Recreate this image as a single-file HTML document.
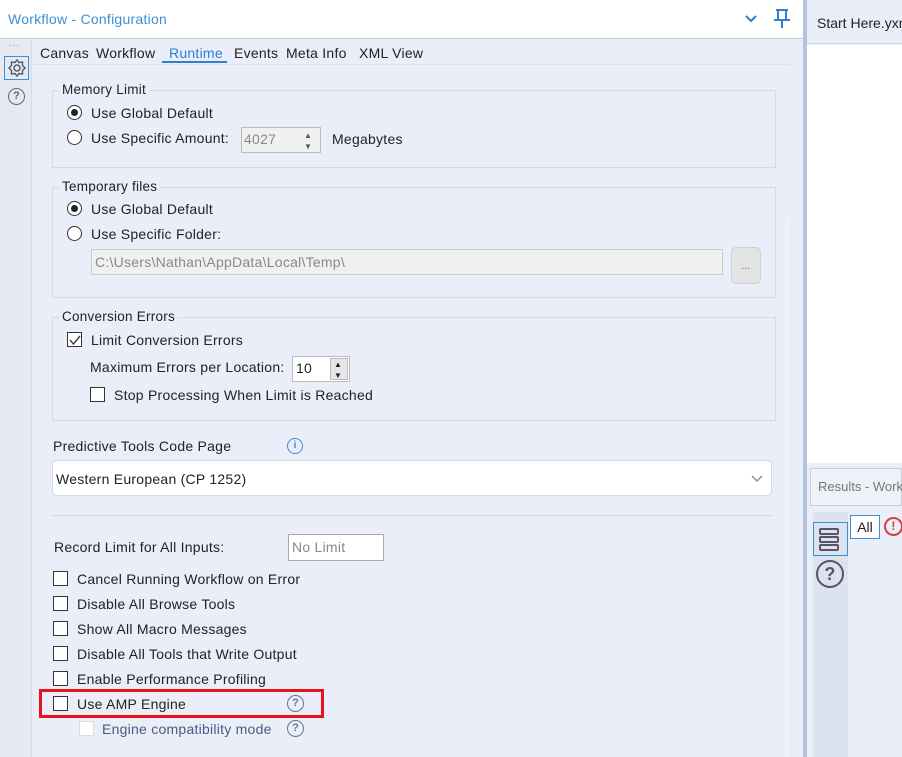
<!DOCTYPE html>
<html><head><style>
*{box-sizing:border-box;margin:0;padding:0}
body{width:902px;height:757px;overflow:hidden;background:#e9eef8;font-family:"Liberation Sans",sans-serif;font-size:14px;letter-spacing:.25px;color:#222;position:relative}
.a{position:absolute}
.t{position:absolute;white-space:nowrap;line-height:16px}
.grp{position:absolute;border:1px solid #d6dbe3}
.lg{position:absolute;background:#e9eef8;padding:0 3px;line-height:14px;font-size:13.5px}
.rad{position:absolute;width:15px;height:15px;border:1px solid #333;border-radius:50%;background:#fff}
.rad.on::after{content:"";position:absolute;left:3px;top:3px;width:7px;height:7px;border-radius:50%;background:#222}
.cb{position:absolute;width:15px;height:15px;border:1px solid #333;background:#fff}
.q{position:absolute;width:17px;height:17px;border:1.5px solid #6a7590;border-radius:50%;color:#6a7590;font-size:11px;font-weight:bold;text-align:center;line-height:14px;letter-spacing:0}
</style></head><body>
<div class="a" style="left:0;top:0;width:804px;height:39px;background:#fff;border-bottom:1px solid #c8ccd4"></div>
<div class="t" style="left:8px;top:11px;color:#3d8fd4;font-size:14px">Workflow - Configuration</div>
<svg class="a" style="left:744px;top:14px" width="14" height="10"><path d="M2 2 L7 7 L12 2" stroke="#2d7fd0" stroke-width="2" fill="none"/></svg>
<svg class="a" style="left:772px;top:8px" width="20" height="22"><path d="M4 2H16M6 2V11M14 2V11M2 12H18M10 12V20" stroke="#2d7fd0" stroke-width="2" fill="none"/></svg>
<div class="a" style="left:803px;top:0;width:4px;height:757px;background:#b4c3e0"></div>
<div class="a" style="left:807px;top:0;width:95px;height:44px;background:#e9eef8;border-bottom:1px solid #d0d8e8"></div>
<div class="t" style="left:817px;top:15px;font-size:14px;letter-spacing:0">Start Here.yxmd</div>
<div class="a" style="left:807px;top:45px;width:95px;height:418px;background:#fff"></div>
<div class="a" style="left:807px;top:463px;width:95px;height:294px;background:#e9eef8"></div>
<div class="a" style="left:810px;top:468px;width:92px;height:38px;border:1px solid #ccd;background:#eef1f6"></div>
<div class="t" style="left:818px;top:479px;color:#777;letter-spacing:0;font-size:13px">Results - Workflow</div>
<div class="a" style="left:813px;top:512px;width:35px;height:245px;background:#dce3ee"></div>
<div class="a" style="left:813px;top:522px;width:35px;height:34px;border:1px solid #3d8fd4"></div>
<svg class="a" style="left:818px;top:527px" width="24" height="26"><rect x="2" y="2" width="18" height="5" rx="1" fill="none" stroke="#556" stroke-width="2"/><rect x="2" y="10" width="18" height="5" rx="1" fill="none" stroke="#556" stroke-width="2"/><rect x="2" y="18" width="18" height="5" rx="1" fill="none" stroke="#556" stroke-width="2"/></svg>
<div class="a" style="left:816px;top:560px;width:28px;height:28px;border:2.5px solid #556;border-radius:50%;color:#556;font-weight:bold;font-size:18px;text-align:center;line-height:24px">?</div>
<div class="a" style="left:850px;top:515px;width:30px;height:24px;border:1px solid #3d8fd4;background:#fff;font-size:14px;text-align:center;line-height:22px;letter-spacing:0">All</div>
<div class="a" style="left:884px;top:517px;width:19px;height:19px;border:2px solid #c44;border-radius:50%;color:#c44;font-weight:bold;font-size:12px;text-align:center;line-height:15px">!</div>
<div class="a" style="left:0;top:40px;width:32px;height:717px;background:#e4e9f2;border-right:1px solid #d6dce6"></div>
<div class="t" style="left:9px;top:38px;color:#999;font-size:10px">···</div>
<div class="a" style="left:4px;top:56px;width:25px;height:24px;border:1px solid #3d8fd4"></div>
<svg class="a" style="left:7px;top:58px" width="20" height="20"><circle cx="10" cy="10" r="3" fill="none" stroke="#556" stroke-width="1.5"/><path d="M10 2L12 4.5L15.5 4L15.5 7.5L18 10L15.5 12.5L15.5 16L12 15.5L10 18L8 15.5L4.5 16L4.5 12.5L2 10L4.5 7.5L4.5 4L8 4.5Z" fill="none" stroke="#556" stroke-width="1.4"/></svg>
<div class="q" style="left:8px;top:88px;border-color:#667;color:#667">?</div>
<div class="t" style="left:40px;top:45px">Canvas</div>
<div class="t" style="left:96px;top:45px">Workflow</div>
<div class="t" style="left:169px;top:45px;color:#2d7fd0">Runtime</div>
<div class="a" style="left:162px;top:61px;width:65px;height:2px;background:#2d7fd0"></div>
<div class="t" style="left:234px;top:45px">Events</div>
<div class="t" style="left:286px;top:45px">Meta Info</div>
<div class="t" style="left:359px;top:45px">XML View</div>
<div class="a" style="left:33px;top:64px;width:757px;height:1px;background:#dde2ea"></div>
<div class="a" style="left:785px;top:218px;width:4px;height:539px;background:#eef2f9"></div>
<div class="grp" style="left:52px;top:90px;width:724px;height:78px"></div>
<div class="lg" style="left:59px;top:83px">Memory Limit</div>
<div class="rad on" style="left:67px;top:105px"></div><div class="t" style="left:91px;top:105px">Use Global Default</div>
<div class="rad" style="left:67px;top:130px"></div><div class="t" style="left:91px;top:130px">Use Specific Amount:</div>
<div class="a" style="left:241px;top:127px;width:80px;height:26px;border:1px solid #bbb;background:#f0f0f0"></div>
<div class="t" style="left:244px;top:131px;color:#888">4027</div>
<div class="t" style="left:304px;top:128px;font-size:8px;color:#555">▲</div><div class="t" style="left:304px;top:139px;font-size:8px;color:#555">▼</div>
<div class="t" style="left:332px;top:131px">Megabytes</div>
<div class="grp" style="left:52px;top:187px;width:724px;height:111px"></div>
<div class="lg" style="left:59px;top:180px">Temporary files</div>
<div class="rad on" style="left:67px;top:201px"></div><div class="t" style="left:91px;top:201px">Use Global Default</div>
<div class="rad" style="left:67px;top:226px"></div><div class="t" style="left:91px;top:226px">Use Specific Folder:</div>
<div class="a" style="left:91px;top:249px;width:632px;height:26px;border:1px solid #ccc;background:#f0f0f0"></div>
<div class="t" style="left:95px;top:254px;color:#888">C:\Users\Nathan\AppData\Local\Temp\</div>
<div class="a" style="left:731px;top:247px;width:30px;height:37px;border:1px solid #d0d0d0;border-radius:5px;background:#e3e3e3;text-align:center;line-height:37px;color:#666;font-size:10px">...</div>
<div class="grp" style="left:52px;top:317px;width:724px;height:104px"></div>
<div class="lg" style="left:59px;top:310px">Conversion Errors</div>
<div class="cb" style="left:67px;top:332px"></div>
<svg class="a" style="left:68px;top:333px" width="14" height="14"><path d="M2 7L5.5 11L12 3" stroke="#444" stroke-width="1.5" fill="none"/></svg>
<div class="t" style="left:91px;top:332px">Limit Conversion Errors</div>
<div class="t" style="left:90px;top:359px">Maximum Errors per Location:</div>
<div class="a" style="left:292px;top:356px;width:58px;height:26px;border:1px solid #bbb;background:#fff"></div>
<div class="t" style="left:296px;top:360px">10</div>
<div class="a" style="left:330px;top:358px;width:18px;height:22px;background:#e6e6e6;border:1px solid #bbb"></div>
<div class="t" style="left:334px;top:357px;font-size:8px">▲</div><div class="t" style="left:334px;top:368px;font-size:8px">▼</div>
<div class="cb" style="left:90px;top:387px"></div><div class="t" style="left:114px;top:387px">Stop Processing When Limit is Reached</div>
<div class="t" style="left:53px;top:438px">Predictive Tools Code Page</div>
<div class="a" style="left:287px;top:438px;width:16px;height:16px;border:1.5px solid #3d8fd4;border-radius:50%;color:#3d8fd4;font-size:10px;font-weight:bold;text-align:center;line-height:13px;letter-spacing:0">i</div>
<div class="a" style="left:52px;top:460px;width:720px;height:36px;border:1px solid #d4dbe8;border-radius:5px;background:#fff"></div>
<div class="t" style="left:56px;top:471px">Western European (CP 1252)</div>
<svg class="a" style="left:750px;top:474px" width="14" height="10"><path d="M2 2L7 7L12 2" stroke="#8890a8" stroke-width="1.5" fill="none"/></svg>
<div class="a" style="left:52px;top:515px;width:720px;height:1px;background:#d4d8df"></div>
<div class="t" style="left:54px;top:539px">Record Limit for All Inputs:</div>
<div class="a" style="left:288px;top:534px;width:96px;height:27px;border:1px solid #aaa;background:#fff"></div>
<div class="t" style="left:292px;top:539px;color:#888">No Limit</div>
<div class="cb" style="left:53px;top:571px"></div><div class="t" style="left:77px;top:571px">Cancel Running Workflow on Error</div>
<div class="cb" style="left:53px;top:596px"></div><div class="t" style="left:77px;top:596px">Disable All Browse Tools</div>
<div class="cb" style="left:53px;top:621px"></div><div class="t" style="left:77px;top:621px">Show All Macro Messages</div>
<div class="cb" style="left:53px;top:646px"></div><div class="t" style="left:77px;top:646px">Disable All Tools that Write Output</div>
<div class="cb" style="left:53px;top:671px"></div><div class="t" style="left:77px;top:671px">Enable Performance Profiling</div>
<div class="cb" style="left:53px;top:696px"></div><div class="t" style="left:77px;top:696px">Use AMP Engine</div>
<div class="q" style="left:287px;top:695px">?</div>
<div class="a" style="left:39px;top:689px;width:285px;height:29px;border:3px solid #e8141c"></div>
<div class="cb" style="left:79px;top:721px;border-color:#ddd"></div><div class="t" style="left:102px;top:721px;color:#4a5a80">Engine compatibility mode</div>
<div class="q" style="left:287px;top:720px">?</div>
</body></html>
